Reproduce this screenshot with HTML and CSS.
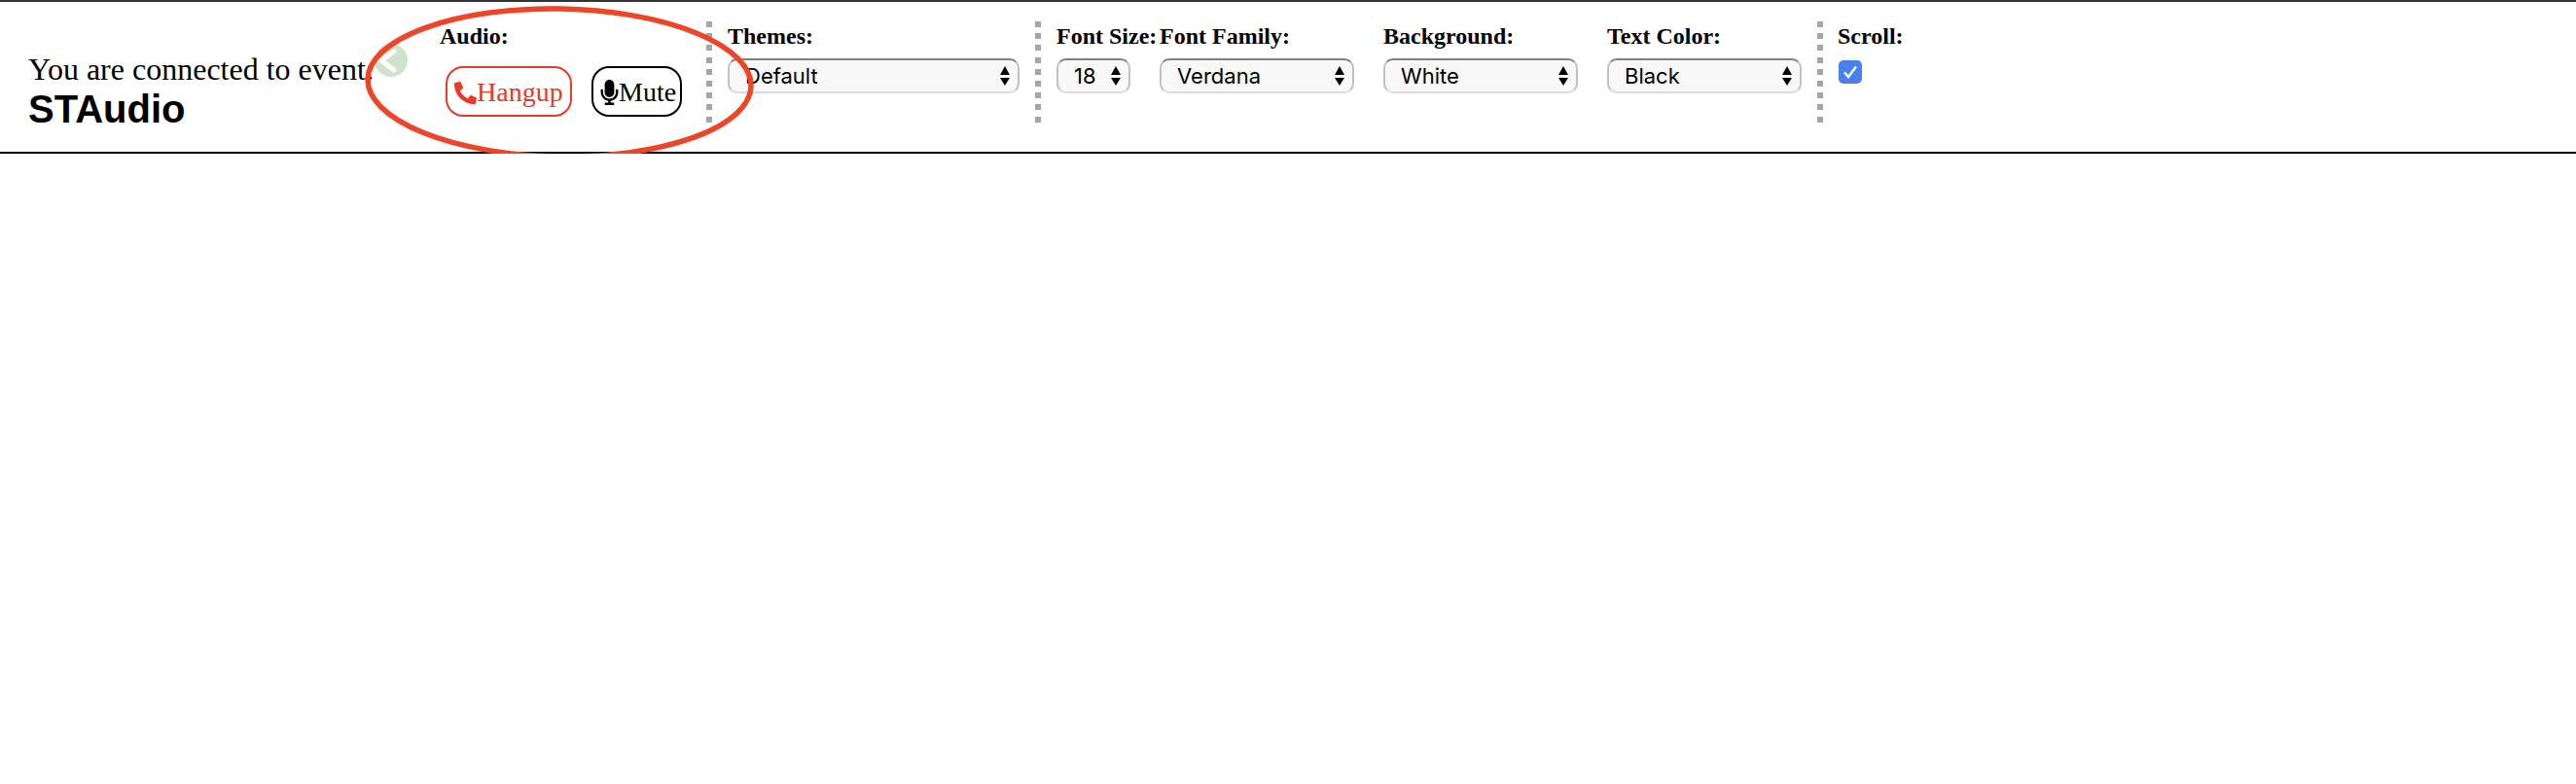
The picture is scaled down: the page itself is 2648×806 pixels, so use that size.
FILE: index.html
```html
<!DOCTYPE html>
<html lang="en">
<head>
    <meta charset="UTF-8">
    <title>STAudio</title>
    <link rel="stylesheet" href="styles.css">
</head>
<body>
    <div class="header">
        <div class="event">
            <div class="event-line">You are connected to event:</div>
            <div class="event-name">STAudio</div>
            <span class="status">
                <svg viewBox="0 0 34 34"><path d="M20 8L7 17L20 27"/></svg>
            </span>
        </div>

        <!-- audio -->
        <div class="group audio">
            <div class="group-label">Audio:</div>
            <div class="audio-buttons">
                <button class="audio-btn hangup">
                    <svg class="phone-icon" viewBox="0 0 512 512"><path d="M497.39 361.8l-112-48a24 24 0 0 0-28 6.9l-49.6 60.6A370.66 370.66 0 0 1 130.6 204.11l60.6-49.6a23.94 23.94 0 0 0 6.9-28l-48-112A24.16 24.16 0 0 0 122.6.61l-104 24A24 24 0 0 0 0 48c0 256.5 207.9 464 464 464a24 24 0 0 0 23.4-18.6l24-104a24.29 24.29 0 0 0-14.01-27.6z"/></svg>Hangup
                </button>
                <button class="audio-btn mute">
                    <svg class="mic-icon" viewBox="0 0 352 512"><path d="M176 352c53.02 0 96-42.98 96-96V96c0-53.02-42.98-96-96-96S80 42.98 80 96v160c0 53.02 42.98 96 96 96zm160-160h-16c-8.84 0-16 7.16-16 16v48c0 74.8-64.49 134.82-140.79 127.38C96.71 376.89 48 317.11 48 250.3V208c0-8.84-7.16-16-16-16H16c-8.84 0-16 7.16-16 16v40.16c0 89.64 63.97 169.55 152 181.69V464H96c-8.84 0-16 7.16-16 16v16c0 8.84 7.16 16 16 16h160c8.84 0 16-7.16 16-16v-16c0-8.84-7.16-16-16-16h-56v-33.77C285.71 418.47 352 344.9 352 256v-48c0-8.84-7.16-16-16-16z"/></svg>Mute
                </button>
            </div>
        </div>
        <div class="divider"></div>

        <!-- themes -->
        <div class="group themes">
            <div class="group-label">Themes:</div>
            <div class="select-wrap wide"><select><option>Default</option></select></div>
        </div>
        <div class="divider"></div>

        <!-- font and colours -->
        <div class="group size">
            <div class="group-label">Font Size:</div>
            <div class="select-wrap small"><select><option>18</option></select></div>
        </div>
        <div class="group family">
            <div class="group-label">Font Family:</div>
            <div class="select-wrap"><select><option>Verdana</option></select></div>
        </div>
        <div class="group background">
            <div class="group-label">Background:</div>
            <div class="select-wrap"><select><option>White</option></select></div>
        </div>
        <div class="group text-color">
            <div class="group-label">Text Color:</div>
            <div class="select-wrap"><select><option>Black</option></select></div>
        </div>
        <div class="divider"></div>

        <div class="group scroll">
            <div class="group-label">Scroll:</div>
            <label class="check">
                <input type="checkbox" checked>
                <svg viewBox="0 0 24 24"><path d="M6 12.500l4 4.500L18 6.500"/></svg>
            </label>
        </div>

        <!-- annotation drawn over the page -->
        <svg class="circle-mark" viewBox="0 0 410 164"><ellipse cx="203" cy="83" rx="197" ry="76" transform="rotate(1 203 83)"/></svg>
    </div>
</body>
</html>
```

FILE: styles.css
```css
body {
    margin: 0;
    background: white;
    color: black;
    font-family: "Liberation Serif", serif;
}

.header {
    position: relative;
    display: flex;
    height: 154px;
    padding-left: 29px;
    border-top: 2px solid #333;
    border-bottom: 2px solid black;
}

.event {
    position: relative;
    width: 423px;
    padding-top: 51px;
}

.event-line {
    font-size: 32px;
    line-height: 37px;
    white-space: nowrap;
}

.event-name {
    font-family: "Liberation Sans", sans-serif;
    font-weight: bold;
    font-size: 40px;
    line-height: 44px;
}

.status {
    position: absolute;
    left: 356px;
    top: 43px;
    width: 34px;
    height: 34px;
    border-radius: 50%;
    background: #cfe2cb;
}

.status svg {
    display: block;
    width: 34px;
    height: 34px;
    fill: none;
    stroke: white;
    stroke-width: 5;
    stroke-linecap: round;
}

.group {
    padding-top: 21px;
}

.group-label {
    font-size: 24px;
    font-weight: bold;
    line-height: 28px;
    height: 37px;
    white-space: nowrap;
}

.audio {
    width: 274px;
}

.audio-buttons {
    display: flex;
    gap: 20px;
    padding-left: 6px;
    padding-top: 8px;
}

.audio-btn {
    display: flex;
    align-items: center;
    height: 52px;
    padding: 2px 7px 0;
    background: white;
    border-radius: 18px;
    font-family: "Liberation Serif", serif;
    font-size: 28px;
}

.hangup {
    width: 130px;
    color: #e8392a;
    border: 2px solid #e8392a;
}

.mute {
    width: 93px;
    color: black;
    border: 2px solid black;
}

.phone-icon {
    width: 23px;
    height: 23px;
    fill: currentColor;
    flex: none;
}

.mic-icon {
    width: 19px;
    height: 26px;
    fill: currentColor;
    flex: none;
}

.divider {
    width: 6px;
    height: 104px;
    margin-top: 20px;
    background: repeating-linear-gradient(to bottom, #a5a5a5 0, #a5a5a5 6px, transparent 6px, transparent 12.200px);
}

.themes {
    margin-left: 16px;
    width: 316px;
}

.size {
    margin-left: 16px;
    width: 106px;
}

.family,
.background {
    width: 230px;
}

.text-color {
    width: 216px;
}

.scroll {
    margin-left: 15px;
}

.select-wrap {
    position: relative;
    width: 200px;
    height: 36px;
}

.select-wrap.wide {
    width: 300px;
}

.select-wrap.small {
    width: 76px;
}

.select-wrap::before,
.select-wrap::after {
    content: "";
    position: absolute;
    right: 10px;
    border-left: 5px solid transparent;
    border-right: 5px solid transparent;
    pointer-events: none;
}

.select-wrap::before {
    top: 8px;
    border-bottom: 9px solid black;
}

.select-wrap::after {
    top: 20px;
    border-top: 8px solid black;
}

select {
    appearance: none;
    width: 100%;
    height: 100%;
    box-sizing: border-box;
    padding: 0 0 0 16px;
    background: #f8f8f8;
    border: 2px solid #c0c0c0;
    border-top-color: #808080;
    border-bottom-color: #dcdcdc;
    border-radius: 10px;
    font-family: Inter, sans-serif;
    font-size: 22px;
    color: black;
}

.check {
    position: relative;
    display: block;
    width: 24px;
    height: 24px;
    margin-left: 1px;
    margin-top: 2px;
}

.check input {
    appearance: none;
    display: block;
    width: 24px;
    height: 24px;
    margin: 0;
    border-radius: 5px;
    background: #4a80ed;
}

.check svg {
    position: absolute;
    left: 0;
    top: 0;
    width: 24px;
    height: 24px;
    fill: none;
    stroke: white;
    stroke-width: 2.500;
}

.circle-mark {
    position: absolute;
    left: 372px;
    top: 0;
    width: 410px;
    height: 164px;
    overflow: visible;
    fill: none;
    stroke: #ee4528;
    stroke-width: 5.500;
    pointer-events: none;
}
```
